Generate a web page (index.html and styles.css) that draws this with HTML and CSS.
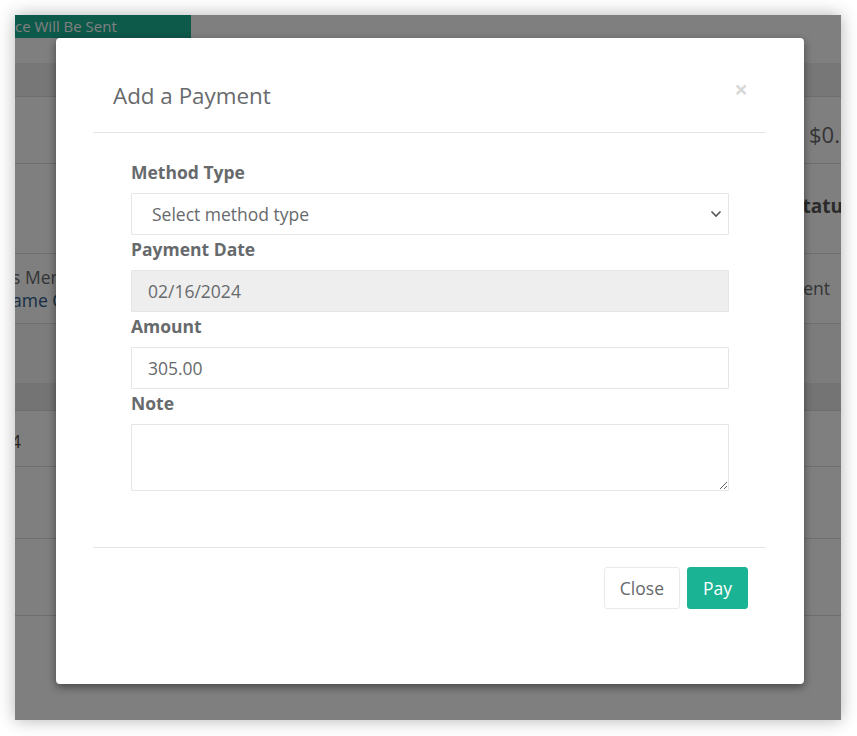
FILE: index.html
```html
<!DOCTYPE html>
<html lang="en">
<head>
    <meta charset="UTF-8">
    <meta name="viewport" content="width=device-width, initial-scale=1.0">
    <title>Add a Payment</title>
    <link rel="stylesheet" href="styles.css">
</head>
<body>
    <div class="screen">
        <div class="page">
            <div class="notice">ce Will Be Sent</div>
            <div class="spacer"></div>
            <div class="bar"></div>
            <div class="row row-total">
                <span class="cell-left"></span>
                <span class="cell-right"><span class="amount">$0.00</span></span>
            </div>
            <div class="row row-head">
                <span class="cell-left"></span>
                <span class="cell-right"><span class="status">Status</span></span>
            </div>
            <div class="row row-item">
                <span class="cell-left">
                    <span class="item-name">s Membership</span>
                    <a class="item-link" href="#">ame Change</a>
                </span>
                <span class="cell-right"><span class="payment">Payment</span></span>
            </div>
            <div class="row row-blank"></div>
            <div class="bar bar-head"></div>
            <div class="row row-date">
                <span class="cell-left"><span class="date">4</span></span>
            </div>
            <div class="row row-empty"></div>
            <div class="row row-empty row-last"></div>
            <div class="row"></div>
        </div>

        <div class="backdrop"></div>

        <div class="modal">
            <div class="modal-header">
                <h4 class="modal-title">Add a Payment</h4>
                <span class="modal-close">&times;</span>
            </div>

            <div class="modal-body">
                <label class="form-label">Method Type</label>
                <div class="select-wrap">
                    <select class="form-control form-select">
                        <option>Select method type</option>
                    </select>
                    <svg class="select-arrow" width="12" height="8" viewBox="0 0 12 8">
                        <path d="M1.5 1.5 L6 6 L10.5 1.5" fill="none" stroke="#555" stroke-width="1.6"/>
                    </svg>
                </div>

                <label class="form-label">Payment Date</label>
                <input class="form-control form-readonly" type="text" value="02/16/2024" readonly>

                <label class="form-label">Amount</label>
                <input class="form-control" type="text" value="305.00">

                <label class="form-label">Note</label>
                <textarea class="form-control form-note"></textarea>
            </div>

            <div class="modal-footer">
                <button class="btn btn-white">Close</button>
                <button class="btn btn-primary">Pay</button>
            </div>
        </div>
    </div>
</body>
</html>
```

FILE: styles.css
```css
* {
    margin: 0;
    padding: 0;
    box-sizing: border-box;
}

body {
    font-family: 'Open Sans', 'Liberation Sans', sans-serif;
    background-color: #fff;
    color: #676a6c;
    padding: 15px 16px 16px 15px;
}

.screen {
    position: relative;
    width: 826px;
    height: 705px;
    overflow: hidden;
    background: #fff;
    box-shadow: 0 0 16px rgba(0,0,0,0.3);
}

/* page behind the dialog */
.page {
    font-size: 17.5px;
    color: #676a6c;
}

.notice {
    width: 176px;
    height: 23px;
    background: #1ab394;
    color: #fff;
    font-size: 15px;
    line-height: 23px;
    white-space: nowrap;
    overflow: hidden;
}

.spacer {
    height: 25px;
}

.bar {
    height: 33px;
    background: #eee;
}

.row {
    display: grid;
    grid-template-columns: 1fr 60px;
    align-items: center;
    border-top: 1px solid #ddd;
    white-space: nowrap;
}

.row-total {
    height: 67px;
    padding-top: 7px;
}

.amount {
    display: inline-block;
    margin-left: 28px;
    font-size: 22px;
}

.row-head {
    height: 90px;
    padding-bottom: 6px;
}

.status {
    display: inline-block;
    margin-left: 11px;
    font-size: 19px;
    font-weight: bold;
    color: #555;
}

.row-item {
    height: 70px;
    line-height: 23px;
}

.item-name,
.item-link {
    display: block;
    margin-left: -3px;
}

.item-link {
    color: #2a5a8a;
    text-decoration: none;
}

.payment {
    display: inline-block;
    margin-left: -23px;
}

.row-blank {
    height: 60px;
    background: #f9f9f9;
}

.bar-head {
    height: 27px;
    background: #e8e8e8;
}

.row-date {
    height: 56px;
    padding-top: 4px;
}

.date {
    display: inline-block;
    margin-left: -4px;
    color: #5a4a3a;
}

.row-empty {
    height: 72px;
}

.row-last {
    height: 77px;
}

.backdrop {
    position: absolute;
    top: 0;
    left: 0;
    right: 0;
    bottom: 0;
    background: rgba(0,0,0,0.5);
}

/* dialog */
.modal {
    position: absolute;
    top: 23px;
    left: 41px;
    width: 748px;
    padding: 0 38px 0 37px;
    background: #fff;
    border-radius: 4px;
    box-shadow: 0 3px 9px rgba(0,0,0,0.45);
}

.modal-header {
    display: flex;
    justify-content: space-between;
    align-items: flex-start;
    height: 95px;
    padding: 40px 20px 0;
    border-bottom: 1px solid #e5e5e5;
}

.modal-title {
    font-size: 22.4px;
    font-weight: 400;
    line-height: 36px;
    color: #676a6c;
}

.modal-close {
    font-size: 24px;
    font-weight: bold;
    line-height: 20px;
    margin-top: 1px;
    margin-right: -2px;
    color: #000;
    opacity: 0.15;
}

.modal-body {
    padding: 25px 37px 56px 38px;
}

.form-label {
    display: block;
    font-size: 17.5px;
    font-weight: bold;
    line-height: 26px;
    padding-top: 1px;
    margin-bottom: 8px;
    color: #676a6c;
}

.form-control {
    display: block;
    width: 100%;
    height: 42px;
    padding: 0 16px;
    border: 1px solid #e5e6e7;
    border-radius: 1px;
    background: #fff;
    font-family: 'Open Sans', 'Liberation Sans', sans-serif;
    font-size: 17.5px;
    color: #676a6c;
    outline: none;
}

.select-wrap {
    position: relative;
}

.form-select {
    appearance: none;
    -webkit-appearance: none;
    padding-left: 20px;
}

.select-arrow {
    position: absolute;
    right: 7px;
    top: 17px;
}

.form-readonly {
    background: #eee;
}

.form-note {
    height: 67px;
    padding: 8px 16px;
    resize: vertical;
}

.modal-footer {
    display: flex;
    justify-content: flex-end;
    gap: 7px;
    padding: 19px 18px 75px 0;
    border-top: 1px solid #e5e5e5;
}

.btn {
    height: 42px;
    padding: 0 15px;
    border-radius: 3px;
    font-family: 'Open Sans', 'Liberation Sans', sans-serif;
    font-size: 17.5px;
    cursor: pointer;
}

.btn-white {
    background: #fff;
    border: 1px solid #e7eaec;
    color: #676a6c;
}

.btn-primary {
    background: #1ab394;
    border: 1px solid #1ab394;
    color: #fff;
}
```
